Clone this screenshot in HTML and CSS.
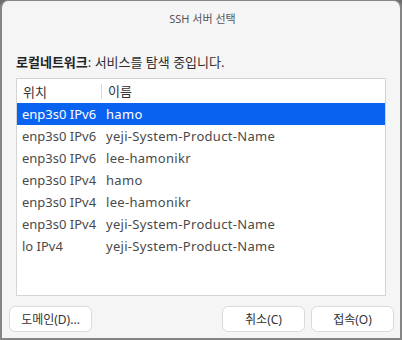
FILE: index.html
```html
<!DOCTYPE html>
<html lang="ko">
<head>
<meta charset="utf-8">
<link rel="stylesheet" href="styles.css">
</head>
<body>
<div class="window">
  <div class="titlebar">SSH 서버 선택</div>
  <div class="content">
    <div class="status"><b>로컬네트워크</b>: 서비스를 탐색 중입니다.</div>
    <div class="list">
      <div class="row header">
        <div class="cell c1">위치</div>
        <div class="cell c2">이름</div>
      </div>
      <div class="row selected"><div class="cell">enp3s0 IPv6</div><div class="cell">hamo</div></div>
      <div class="row"><div class="cell">enp3s0 IPv6</div><div class="cell">yeji-System-Product-Name</div></div>
      <div class="row"><div class="cell">enp3s0 IPv6</div><div class="cell">lee-hamonikr</div></div>
      <div class="row"><div class="cell">enp3s0 IPv4</div><div class="cell">hamo</div></div>
      <div class="row"><div class="cell">enp3s0 IPv4</div><div class="cell">lee-hamonikr</div></div>
      <div class="row"><div class="cell">enp3s0 IPv4</div><div class="cell">yeji-System-Product-Name</div></div>
      <div class="row"><div class="cell">lo IPv4</div><div class="cell">yeji-System-Product-Name</div></div>
    </div>
  </div>
  <div class="buttons">
    <button class="btn">도메인(D)...</button>
    <div class="spacer"></div>
    <button class="btn">취소(C)</button>
    <button class="btn">접속(O)</button>
  </div>
</div>
</body>
</html>
```
FILE: styles.css
```css
html, body {
  margin: 0;
  padding: 0;
  background: #6e6e6e;
}
body {
  font-family: "Noto Sans", "Noto Sans CJK KR", sans-serif;
  width: 402px;
  height: 340px;
}
.window {
  box-sizing: border-box;
  width: 402px;
  height: 340px;
  background: #f5f5f5;
  border: 2px solid #858585;
  border-top-width: 1px;
  border-radius: 8px 8px 0 0;
  display: flex;
  flex-direction: column;
}
.titlebar {
  height: 34px;
  display: flex;
  align-items: center;
  justify-content: center;
  font-size: 11px;
  color: #555;
  padding-left: 3px;
}
.content {
  padding: 0 14px;
  flex: 1;
  display: flex;
  flex-direction: column;
}
.status {
  margin-top: 18px;
  font-size: 13px;
  line-height: 18px;
  color: #2e2e2e;
}
.status b {
  font-weight: 700;
  color: #222;
}
.list {
  margin-top: 7px;
  height: 218px;
  box-sizing: border-box;
  background: #fff;
  border: 1px solid #d4d4d4;
}
.row {
  display: grid;
  grid-template-columns: 84px 1fr;
  height: 22px;
  align-items: center;
  font-size: 13px;
  color: #4a4a4a;
}
.row .cell {
  padding-left: 5px;
  white-space: nowrap;
}
.row:not(.header) .cell + .cell {
  letter-spacing: 0.3px;
}
.row.header {
  height: 24px;
  color: #333;
  font-size: 13px;
}
.row.header .c1 {
  padding-left: 6px;
}
.row.header .c2 {
  padding-left: 6px;
  border-left: 1px solid #d8d8d8;
  line-height: 15px;
}
.row.selected {
  background: #0a62f0;
  color: #fff;
}
.buttons {
  display: flex;
  padding: 8px 6px 6px 7px;
  gap: 6px;
}
.spacer {
  flex: 1;
}
.btn {
  width: 83px;
  height: 26px;
  box-sizing: border-box;
  border: 1px solid #dadada;
  border-radius: 6px;
  background: #fff;
  font-family: "Noto Sans", "Noto Sans CJK KR", sans-serif;
  font-size: 12px;
  color: #333;
  padding: 0;
}
```
